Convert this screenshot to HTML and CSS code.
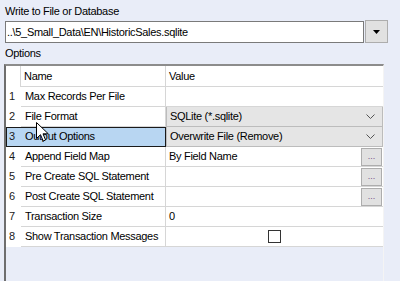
FILE: index.html
```html
<!DOCTYPE html>
<html>
<head>
<meta charset="utf-8">
<link rel="stylesheet" href="styles.css">
</head>
<body>
<div class="label first">Write to File or Database</div>
<div class="pathrow">
  <div class="pathbox">..\5_Small_Data\EN\HistoricSales.sqlite</div>
  <div class="dropbtn"><svg width="7" height="4" viewBox="0 0 7 4"><path d="M0 0H7L3.5 4Z" fill="#000"/></svg></div>
</div>
<div class="label opts">Options</div>
<div class="grid">
  <div class="row head">
    <div class="key"><div class="num"></div><div class="name">Name</div></div>
    <div class="val">Value</div>
  </div>
  <div class="row">
    <div class="key"><div class="num">1</div><div class="name">Max Records Per File</div></div>
    <div class="val"></div>
  </div>
  <div class="row">
    <div class="key"><div class="num">2</div><div class="name">File Format</div></div>
    <div class="val combo"><span>SQLite (*.sqlite)</span><svg class="chev" width="9" height="5" viewBox="0 0 9 5"><path d="M0.5 0.5L4.5 4.5L8.5 0.5" fill="none" stroke="#555" stroke-width="1"/></svg></div>
  </div>
  <div class="row sel">
    <div class="key"><div class="num">3</div><div class="name">Output Options</div></div>
    <div class="val combo"><span>Overwrite File (Remove)</span><svg class="chev" width="9" height="5" viewBox="0 0 9 5"><path d="M0.5 0.5L4.5 4.5L8.5 0.5" fill="none" stroke="#555" stroke-width="1"/></svg></div>
  </div>
  <div class="row">
    <div class="key"><div class="num">4</div><div class="name">Append Field Map</div></div>
    <div class="val"><span class="grow">By Field Name</span><div class="ell">...</div></div>
  </div>
  <div class="row">
    <div class="key"><div class="num">5</div><div class="name">Pre Create SQL Statement</div></div>
    <div class="val"><span class="grow"></span><div class="ell">...</div></div>
  </div>
  <div class="row">
    <div class="key"><div class="num">6</div><div class="name">Post Create SQL Statement</div></div>
    <div class="val"><span class="grow"></span><div class="ell">...</div></div>
  </div>
  <div class="row">
    <div class="key"><div class="num">7</div><div class="name">Transaction Size</div></div>
    <div class="val">0</div>
  </div>
  <div class="row">
    <div class="key"><div class="num">8</div><div class="name">Show Transaction Messages</div></div>
    <div class="val center"><div class="check"></div></div>
  </div>
</div>
<svg class="cursor" width="13" height="20" viewBox="0 0 13 20"><path d="M0.5 0.5V16.5L4.5 12.7L7.2 19L9.6 18L7 11.8H12.3Z" fill="#fff" stroke="#000" stroke-width="1" stroke-linejoin="miter"/></svg>
</body>
</html>
```
FILE: styles.css
```css
html, body {
  margin: 0;
  padding: 0;
}
body {
  width: 400px;
  height: 281px;
  overflow: hidden;
  background: #e9edf8;
  font-family: "Liberation Sans", Arial, sans-serif;
  font-size: 11px;
  letter-spacing: -0.3px;
  color: #000;
  position: relative;
}
.label {
  padding-left: 5px;
  height: 15px;
  line-height: 15px;
}
.label.first {
  margin-top: 4px;
}
.pathrow {
  display: flex;
  margin-top: 2px;
  margin-left: 5px;
  gap: 1px;
}
.pathbox {
  width: 356px;
  height: 20px;
  border: 1px solid #7a7a7a;
  background: #fff;
  line-height: 20px;
  padding-left: 1px;
}
.dropbtn {
  width: 21px;
  height: 21px;
  border: 1px solid #adadad;
  background: #e1e1e1;
  display: flex;
  align-items: center;
  justify-content: center;
  margin-top: -1px;
}
.opts {
  margin-top: 3px;
}
.grid {
  margin-top: 3px;
  margin-left: 4px;
  width: 377px;
  height: 215px;
  border-top: 2px solid #8c8c8c;
  border-left: 2px solid #6e6e6e;
  border-right: 1px solid #f4f4f4;
  background: #e9edf8;
}
.row {
  display: flex;
  height: 20px;
  line-height: 19px;
}
.row.head {
  height: 21px;
  line-height: 20px;
}
.key {
  display: flex;
  width: 160px;
  flex: none;
}
.num {
  width: 15px;
  flex: none;
  background: #fff;
  padding-left: 3px;
  box-sizing: border-box;
  color: #1a1a1a;
}
.head .num {
  border-right: 1px solid #d6d6d6;
}
.name {
  flex: 1;
  background: #fff;
  padding-left: 4px;
  border-bottom: 1px solid #d6d6d6;
  border-right: 1px solid #d6d6d6;
  white-space: nowrap;
  overflow: hidden;
}
.head .name {
  padding-left: 3px;
}
.val {
  flex: 1;
  background: #fff;
  border-bottom: 1px solid #d6d6d6;
  padding-left: 3px;
  display: flex;
  align-items: center;
  white-space: nowrap;
}
.head .val {
  align-items: flex-start;
}
.val.center {
  justify-content: center;
  padding-left: 0;
}
.combo {
  background: #e5e5e5;
  border: 1px solid #bcbcbc;
  border-top: none;
  justify-content: space-between;
  padding-right: 7px;
}
.row.sel .num,
.row.sel .name {
  background: #b8d6f2;
}
.row.sel .key {
  outline: 1px solid #1a1a1a;
  outline-offset: -1px;
}
.row.sel .name {
  border-bottom-color: #1a1a1a;
}
.grow {
  flex: 1;
}
.ell {
  width: 19px;
  height: 16px;
  border: 1px solid #adadad;
  background: #e1e1e1;
  margin-right: 1px;
  font-size: 9px;
  line-height: 14px;
  letter-spacing: 0;
  text-align: center;
  color: #7a4f8a;
}
.check {
  width: 11px;
  height: 11px;
  border: 1px solid #333;
  background: #fff;
}
.cursor {
  position: absolute;
  left: 36px;
  top: 122px;
}
```
